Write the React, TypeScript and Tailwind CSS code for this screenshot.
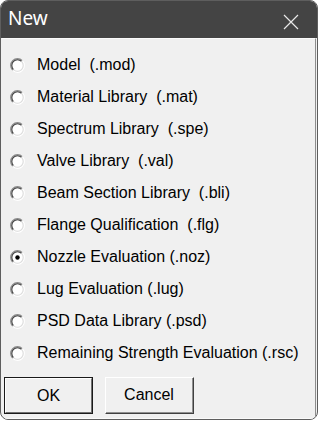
import { useState } from 'react'

const OPTIONS = [
  'Model  (.mod)',
  'Material Library  (.mat)',
  'Spectrum Library  (.spe)',
  'Valve Library  (.val)',
  'Beam Section Library  (.bli)',
  'Flange Qualification  (.flg)',
  'Nozzle Evaluation (.noz)',
  'Lug Evaluation (.lug)',
  'PSD Data Library (.psd)',
  'Remaining Strength Evaluation (.rsc)',
]

// classic 3D radio, drawn as two-tone arcs
function Radio({ checked }: { checked: boolean }) {
  const arc = (r: number, tl: boolean) => {
    const c = 7.5
    const d = r * Math.SQRT1_2
    const a = `${c - d} ${c + d}`
    const b = `${c + d} ${c - d}`
    return tl ? `M${a} A${r} ${r} 0 0 1 ${b}` : `M${b} A${r} ${r} 0 0 1 ${a}`
  }
  return (
    <svg width="15" height="15" viewBox="0 0 15 15" className="shrink-0">
      <circle cx="7.5" cy="7.5" r="6" fill="#ffffff" />
      <path d={arc(6.8, true)} stroke="#8a8a8a" strokeWidth="1.2" fill="none" />
      <path d={arc(6.8, false)} stroke="#ffffff" strokeWidth="1.2" fill="none" />
      <path d={arc(5.7, true)} stroke="#3c3c3c" strokeWidth="1.1" fill="none" />
      <path d={arc(5.7, false)} stroke="#dcdcdc" strokeWidth="1.1" fill="none" />
      {checked && <circle cx="7.5" cy="7.5" r="2.2" fill="#000000" />}
    </svg>
  )
}

export default function App() {
  const [sel, setSel] = useState(6)

  return (
    <div className="w-[321px] h-[423px] bg-white">
      <div className="w-[318px] h-[420px] rounded-[8px] border border-[#5e5e5e] overflow-hidden flex flex-col bg-[#f0f0f0]">
        <div className="h-[37px] shrink-0 bg-[#444444] flex items-center justify-between pl-[7px] pr-[18px]">
          <span className="text-white text-[19px] leading-none font-['Noto_Sans',sans-serif] -mt-[2px]">New</span>
          <svg width="16" height="16" viewBox="0 0 16 16" className="mt-[4px]">
            <path d="M1 1 L15 15 M15 1 L1 15" stroke="#e8e8e8" strokeWidth="1.2" fill="none" />
          </svg>
        </div>
        <div className="flex-1 flex flex-col border-t border-t-[#fbfbfb] border-b border-b-[#fafafa] border-r border-r-[#8c8c8c] mx-[1px] pt-[10px] font-['Liberation_Sans',Arial,sans-serif] text-[16px] text-black">
          {OPTIONS.map((o, i) => (
            <label key={o} className="h-[32px] flex items-center pl-[8px] gap-[12px] cursor-default" onClick={() => setSel(i)}>
              <Radio checked={sel === i} />
              <span className="whitespace-pre">{o}</span>
            </label>
          ))}
          <div className="flex gap-[12px] pl-[2px] mt-[8px]">
            <button className="w-[89px] h-[37px] border border-[#1a1a1a] bg-[#f0f0f0] flex items-center justify-center">
              <span className="w-full h-full flex items-center justify-center border-r border-b border-r-[#707070] border-b-[#707070] border-t border-l border-t-white border-l-white">OK</span>
            </button>
            <button className="w-[89px] h-[37px] border-t border-l border-t-white border-l-white border-r border-b border-r-[#404040] border-b-[#404040] bg-[#f0f0f0] flex items-center justify-center">
              <span className="w-full h-full flex items-center justify-center border-r border-b border-r-[#909090] border-b-[#909090]">Cancel</span>
            </button>
          </div>
        </div>
      </div>
    </div>
  )
}
